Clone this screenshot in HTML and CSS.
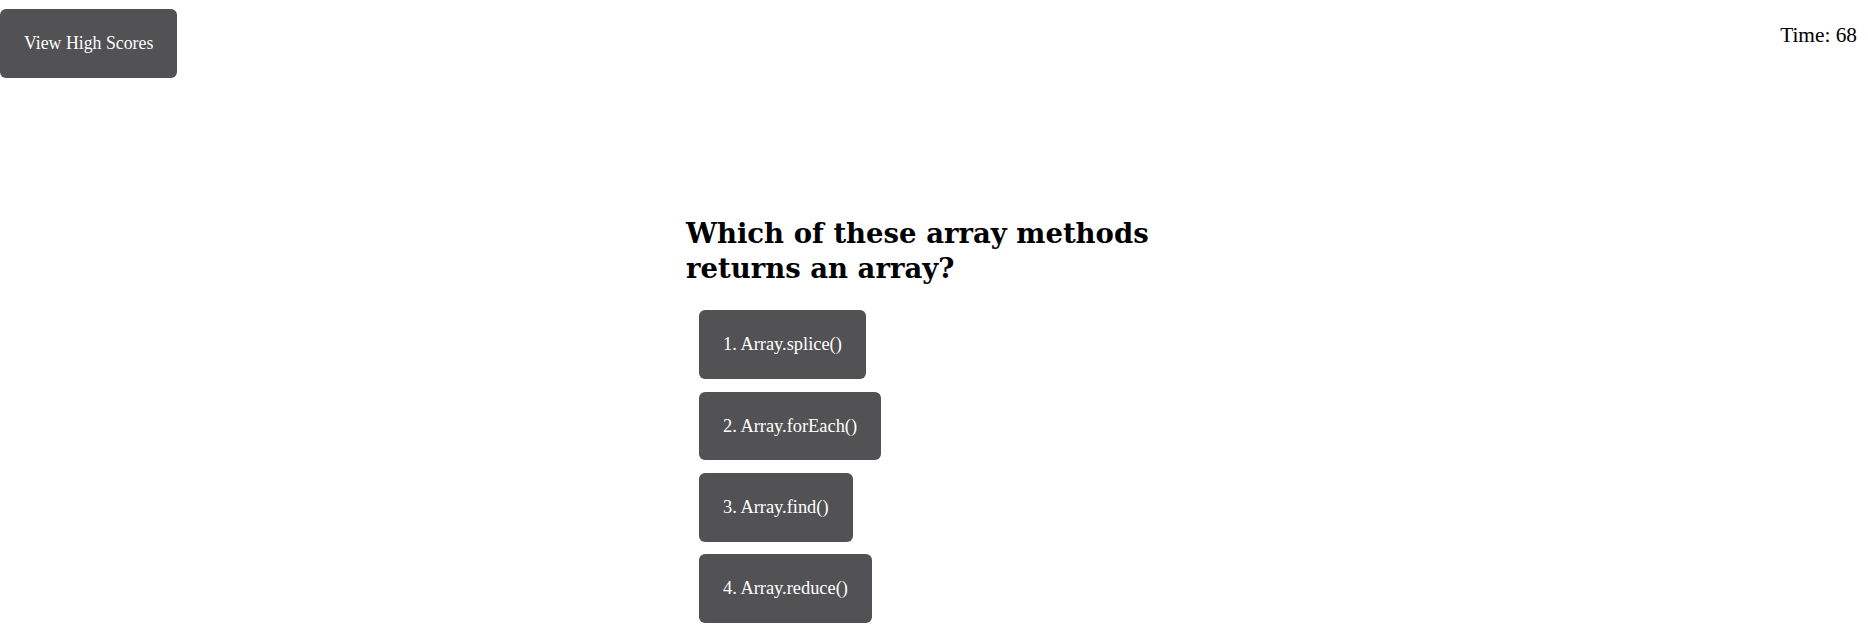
FILE: index.html
```html
<!DOCTYPE html>
<html lang="en">
<head>
<meta charset="utf-8">
<title>Quiz</title>
<link rel="stylesheet" href="styles.css">
</head>
<body>
<header class="top-bar">
  <button class="btn btn-scores">View High Scores</button>
  <div class="timer">Time: 68</div>
</header>
<main class="quiz">
  <h2 class="question">Which of these array methods returns an array?</h2>
  <div class="choices">
    <button class="btn">1. Array.splice()</button>
    <button class="btn">2. Array.forEach()</button>
    <button class="btn">3. Array.find()</button>
    <button class="btn">4. Array.reduce()</button>
  </div>
</main>
</body>
</html>
```

FILE: styles.css
```css
html, body {
  margin: 0;
  padding: 0;
  background: #ffffff;
}

body {
  font-family: "Liberation Serif", "Times New Roman", serif;
  color: #000000;
}

.top-bar {
  display: flex;
  justify-content: space-between;
  align-items: flex-start;
  padding: 9px 11px 0 0;
}

.btn {
  display: block;
  border: none;
  margin: 0;
  padding: 24px;
  background: #525254;
  color: #ffffff;
  font-family: "Liberation Serif", "Times New Roman", serif;
  font-size: 18.4px;
  line-height: 20.7px;
  border-radius: 6px;
  cursor: pointer;
}

.btn-scores {
  font-size: 17.8px;
}

.timer {
  font-size: 21.33px;
  margin-top: 14px;
}

.quiz {
  width: 500px;
  margin: 0 auto;
  padding-top: 138px;
}

.question {
  margin: 0;
  padding-left: 2px;
  font-family: "DejaVu Serif", "Liberation Serif", serif;
  font-weight: bold;
  font-size: 27.5px;
  line-height: 35px;
}

.choices {
  display: flex;
  flex-direction: column;
  align-items: flex-start;
  gap: 12.6px;
  padding-left: 15px;
  margin-top: 24.5px;
}
```
